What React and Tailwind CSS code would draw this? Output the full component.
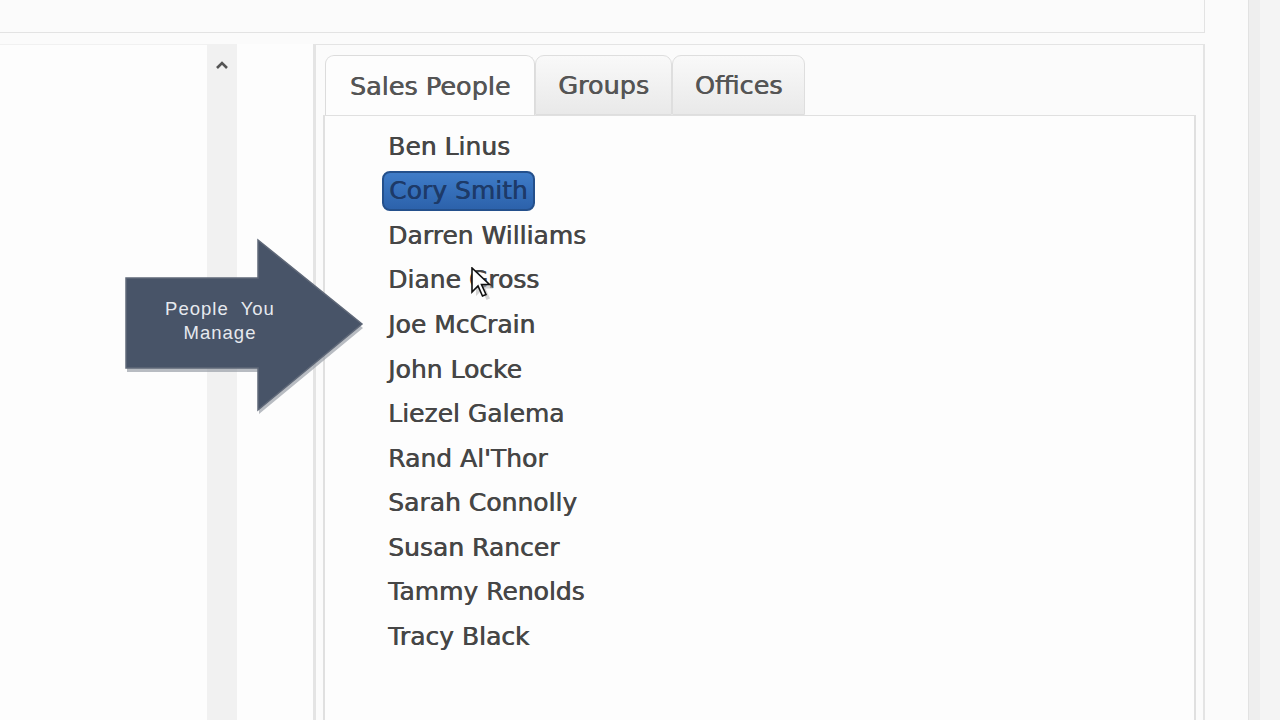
const people = [
  'Ben Linus',
  'Cory Smith',
  'Darren Williams',
  'Diane Gross',
  'Joe McCrain',
  'John Locke',
  'Liezel Galema',
  "Rand Al'Thor",
  'Sarah Connolly',
  'Susan Rancer',
  'Tammy Renolds',
  'Tracy Black',
]

function Tab({ label, active, width }) {
  return (
    <div
      className={
        active
          ? 'h-[61px] -mb-px flex items-center justify-center rounded-t-[9px] border border-b-0 border-[#dcdcdc] bg-[#fdfdfd] text-[25.5px] text-[#555] [text-shadow:0.6px_0_0_#555]'
          : 'h-[60px] flex items-center justify-center rounded-t-[9px] border border-[#dedede] bg-gradient-to-b from-[#f9f9f9] to-[#e9e9e9] text-[25.5px] text-[#555] [text-shadow:0.6px_0_0_#555]'
      }
      style={{ width }}
    >
      {label}
    </div>
  )
}

function PointerArrow() {
  return (
    <div className="absolute left-[118px] top-[234px] w-[260px] h-[184px]">
      <svg width="260" height="184" viewBox="0 0 260 184">
        <polygon points="9,48 141,48 141,10 245,94 141,180 141,138 9,138" fill="#9aa0a8" opacity="0.7" />
        <polygon points="8,44 140,44 140,6 244,90 140,176 140,134 8,134" fill="#485468" stroke="#5f6878" strokeWidth="1.5" />
      </svg>
      <div className="absolute left-[22px] top-[63px] w-[160px] text-center font-['Liberation_Sans',Arial,sans-serif] text-[18.5px] leading-[24px] tracking-[1px] text-[#e6e9ee]">
        <div>People&nbsp; You</div>
        <div>Manage</div>
      </div>
    </div>
  )
}

function Cursor() {
  return (
    <svg className="absolute left-[471px] top-[267px]" width="24" height="34" viewBox="0 0 24 34">
      <path d="M3,3 L3,27 L9,21 L13.5,31 L17,29.5 L12.5,19.5 L20.5,19.5 Z" fill="#b9b9b9" opacity="0.6" transform="translate(2,2)" />
      <path d="M1,1 L1,25 L7,19 L11.5,29 L15,27.5 L10.5,17.5 L18.5,17.5 Z" fill="#fff" stroke="#111" strokeWidth="1.6" strokeLinejoin="miter" />
    </svg>
  )
}

export default function App() {
  return (
    <div className="relative w-[1280px] h-[720px] overflow-hidden flex bg-[#fbfbfb] font-['DejaVu_Sans',Verdana,sans-serif]">
      <div className="w-[1248px] flex flex-col">
        <div className="h-[33px] w-[1205px] shrink-0 border-b border-r border-[#e3e3e3] bg-[#fbfbfb]" />
        <div className="flex flex-1 pt-[11px]">
          <div className="w-[207px] bg-[#fdfdfd] border-t border-[#f1f1f1]" />
          <div className="w-[30px] bg-[#f1f1f1] flex justify-center pt-[16px]">
            <svg width="14" height="10" viewBox="0 0 14 10">
              <path d="M2,8 L7,3 L12,8" fill="none" stroke="#555" strokeWidth="2.6" />
            </svg>
          </div>
          <div className="w-[76px] bg-[#fdfdfd]" />
          <div className="w-[892px] flex flex-col border-l-[3px] border-t border-r-2 border-[#e4e4e4] pl-[7px] pr-[7px] pt-[10px]">
            <div className="flex pl-[2px]">
              <Tab label="Sales People" width={210} active />
              <Tab label="Groups" width={137} />
              <Tab label="Offices" width={133} />
            </div>
            <div className="flex-1 border-l-2 border-t border-r-2 border-[#e0e0e0] bg-[#fdfdfd] pl-[63px] pt-[8px]">
              {people.map((name, i) => (
                <div key={name} className="h-[44.6px] flex items-center text-[25px] text-[#464646] [text-shadow:0.6px_0_0_#464646]">
                  {i === 1 ? (
                    <span className="-ml-[6px] h-[40px] px-[5px] flex items-center rounded-[8px] border-2 border-[#24508c] bg-gradient-to-b from-[#3f7cc8] to-[#2c62ab] text-[#1d3a68] [text-shadow:0.6px_0_0_#1d3a68]">
                      {name}
                    </span>
                  ) : (
                    <span>{name}</span>
                  )}
                </div>
              ))}
            </div>
          </div>
        </div>
      </div>
      <div className="w-[12px] bg-[#eeeeee] border-l border-[#e2e2e2]" />
      <div className="flex-1 bg-[#f4f4f4]" />

      <PointerArrow />
      <Cursor />
    </div>
  )
}
